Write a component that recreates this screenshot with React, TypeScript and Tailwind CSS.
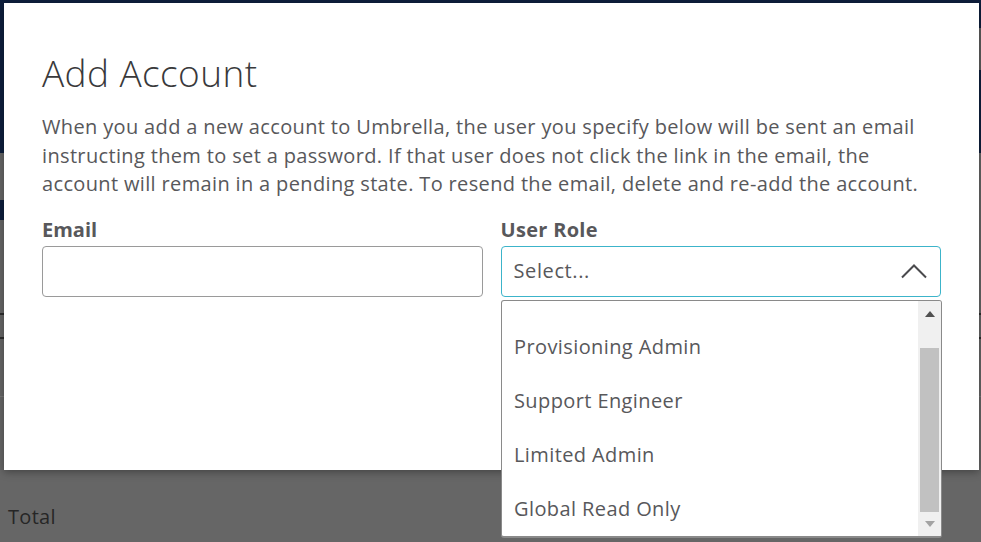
import React from 'react'

const roles = ['Provisioning Admin', 'Support Engineer', 'Limited Admin', 'Global Read Only']

function ChevronUp() {
  return (
    <svg width="28" height="16" viewBox="0 0 28 16" fill="none" className="text-[#4a4a4d]">
      <path d="M2 14.5 L14 2.5 L26 14.5" stroke="currentColor" strokeWidth="2" />
    </svg>
  )
}

function Background() {
  return (
    <div className="flex h-full flex-col">
      <div className="flex h-[153px] flex-col bg-[#0e1f3d]">
        <div className="mt-[28px] ml-auto h-[42px] w-[6px] bg-[#5e5e5e]" />
      </div>
      <div className="h-[47px]" />
      <div className="h-[20px] w-[4px] bg-[#0e1f3d]" />
      <div className="h-[95px] border-b-2 border-[#2e2e2e]" />
      <div className="h-[24px] border-b-2 border-[#2e2e2e]" />
      <div className="h-[58px] border-b border-[#777]" />
      <div className="flex flex-1 items-end pb-[10px] pl-[8px]">
        <span className="text-[20px] tracking-[0.3px] text-[#262626]">Total</span>
      </div>
    </div>
  )
}

export default function App() {
  return (
    <div
      className="relative h-[542px] w-[981px] overflow-hidden bg-[#666666]"
      style={{ fontFamily: '"Open Sans", "Liberation Sans", sans-serif' }}
    >
      <Background />

      {/* Modal */}
      <div className="absolute left-[4px] top-[3px] h-[467px] w-[975px] bg-white px-[38px] pt-[48px] shadow-[0_2px_8px_rgba(0,0,0,0.35)]">
        <h1 className="text-[37px] font-light leading-[44px] tracking-[0.4px] text-[#39393b]">Add Account</h1>
        <p className="mt-[18px] text-[20px] leading-[28.5px] tracking-[0.35px] text-[#58585b]">
          When you add a new account to Umbrella, the user you specify below will be sent an email
          <br />
          instructing them to set a password. If that user does not click the link in the email, the
          <br />
          account will remain in a pending state. To resend the email, delete and re-add the account.
        </p>
        <div className="mt-[19px] grid grid-cols-2 gap-[18px]">
          <div className="flex flex-col gap-[4px]">
            <label className="text-[20px] font-bold leading-[24px] text-[#58585b]">Email</label>
            <div className="h-[51px] rounded-[4px] border border-[#9a9a9a] bg-white" />
          </div>
          <div className="flex flex-col gap-[4px]">
            <label className="text-[20px] font-bold leading-[24px] tracking-[0.3px] text-[#58585b]">User Role</label>
            <div className="flex h-[51px] items-center justify-between rounded-[4px] border border-[#3cb4ca] bg-white pl-[12px] pr-[12px]">
              <span className="text-[20px] tracking-[0.6px] text-[#58585b]">Select...</span>
              <ChevronUp />
            </div>
          </div>
        </div>
      </div>

      {/* focus ring behind list */}
      <div className="absolute left-[915px] top-[381px] h-[50px] w-[1px] bg-[#8fd3de]" />

      {/* Dropdown list */}
      <div className="absolute left-[501px] top-[300px] flex h-[238px] w-[441px] overflow-hidden rounded-[3px] border border-b-2 border-[#8a8a8a] bg-white">
        <ul className="flex-1 pt-[19px]">
          {roles.map((r) => (
            <li key={r} className="flex h-[54px] items-center pl-[12px] text-[20px] tracking-[0.4px] text-[#58585b]">
              {r}
            </li>
          ))}
        </ul>
        <div className="flex w-[23px] flex-col bg-[#f0f0f0]">
          <div className="flex h-[26px] items-center justify-center">
            <svg width="10" height="6" viewBox="0 0 10 6">
              <path d="M0 6 L5 0 L10 6 Z" fill="#505050" />
            </svg>
          </div>
          <div className="h-[21px]" />
          <div className="mx-[2px] h-[164px] bg-[#c1c1c1]" />
          <div className="flex flex-1 items-center justify-center">
            <svg width="10" height="6" viewBox="0 0 10 6">
              <path d="M0 0 L5 6 L10 0 Z" fill="#a3a3a3" />
            </svg>
          </div>
        </div>
      </div>
    </div>
  )
}
